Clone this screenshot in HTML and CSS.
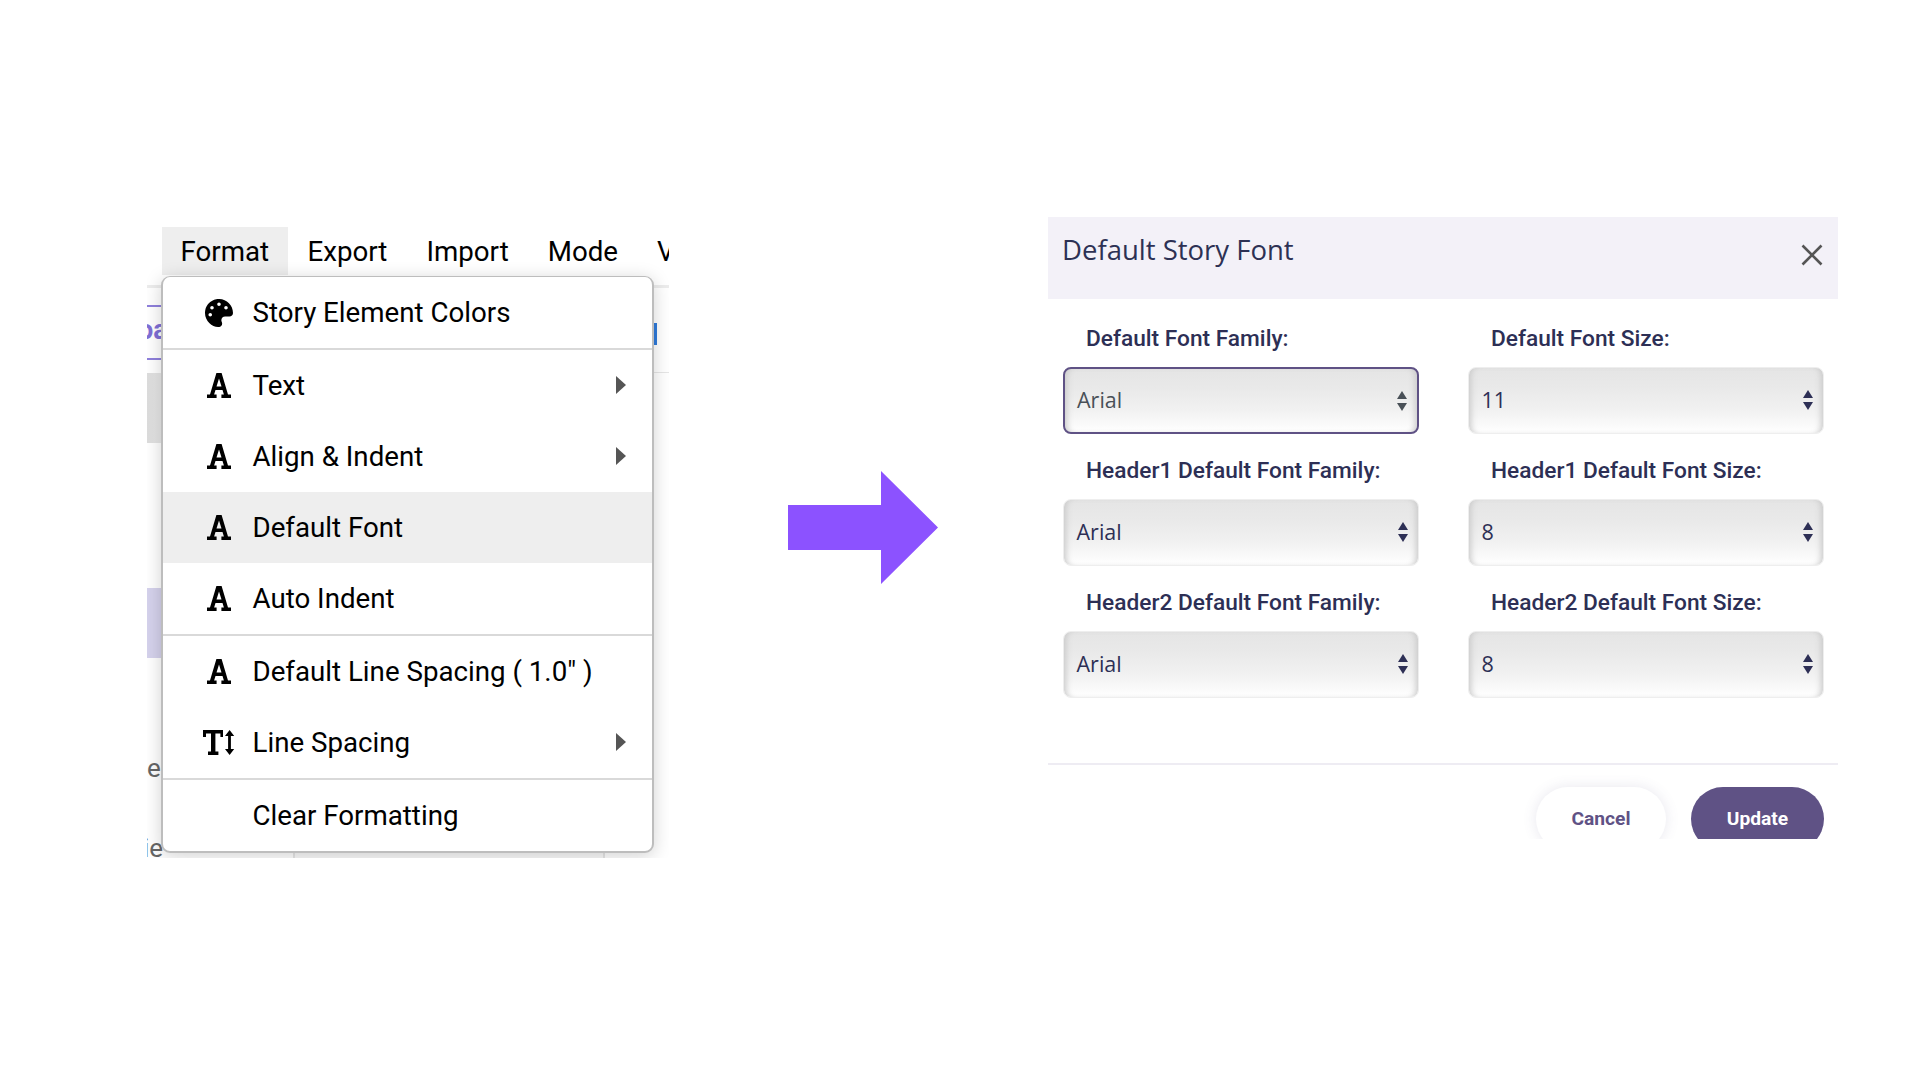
FILE: index.html
```html
<!DOCTYPE html>
<html lang="en">
<head>
<meta charset="utf-8">
<title>Default Story Font</title>
<link rel="stylesheet" href="styles.css">
</head>
<body>
<svg class="defs" width="0" height="0" aria-hidden="true">
  <symbol id="i-a" viewBox="0 0 24 25"><path fill-rule="evenodd" d="M9.4 0h5.2l6.4 21.4H24V25h-9.6v-3.6h2.5l-1.4-4.5H8.5l-1.400 4.500h2.500V25H0v-3.600h3zM12 5.600L9.500 13.600h5z"/></symbol>
</svg>
<section class="app">
  <div class="backdrop">
    <span class="bg-line"></span>
    <span class="bg-tab"></span>
    <span class="bg-text">oa</span>
    <span class="bg-blue"></span>
    <span class="bg-grey"></span>
    <span class="bg-rule"></span>
    <span class="bg-lilac"></span>
    <span class="bg-e">e</span>
    <span class="bg-ie">ie</span>
    <span class="bg-foot"></span>
  </div>
  <nav class="tabs">
    <span class="tab active">Format</span>
    <span class="tab">Export</span>
    <span class="tab">Import</span>
    <span class="tab">Mode</span>
    <span class="tab">View</span>
  </nav>
  <div class="menu">
    <div class="item">
      <svg class="icon palette" viewBox="0 0 512 512"><path d="M204.3 5C104.9 24.4 24.8 104.3 5.2 203.4c-37 187 131.7 326.4 258.8 306.7 41.2-6.4 61.4-54.6 42.5-91.7-23.1-45.4 9.9-98.4 60.9-98.4h79.7c35.8 0 64.8-29.6 64.9-65.3C511.5 97.1 368.1-26.9 204.3 5zM96 320c-17.7 0-32-14.3-32-32s14.3-32 32-32 32 14.3 32 32-14.3 32-32 32zm32-128c-17.7 0-32-14.3-32-32s14.3-32 32-32 32 14.3 32 32-14.3 32-32 32zm128-64c-17.7 0-32-14.3-32-32s14.3-32 32-32 32 14.3 32 32-14.3 32-32 32zm128 64c-17.7 0-32-14.3-32-32s14.3-32 32-32 32 14.3 32 32-14.3 32-32 32z"/></svg>
      <span>Story Element Colors</span>
    </div>
    <div class="item sep">
      <svg class="icon"><use href="#i-a"/></svg><span>Text</span><i class="caret"></i>
    </div>
    <div class="item">
      <svg class="icon"><use href="#i-a"/></svg><span>Align &amp; Indent</span><i class="caret"></i>
    </div>
    <div class="item hover">
      <svg class="icon"><use href="#i-a"/></svg><span>Default Font</span>
    </div>
    <div class="item">
      <svg class="icon"><use href="#i-a"/></svg><span>Auto Indent</span>
    </div>
    <div class="item sep">
      <svg class="icon"><use href="#i-a"/></svg><span>Default Line Spacing ( 1.0" )</span>
    </div>
    <div class="item">
      <svg class="icon" viewBox="0 0 32 25"><path d="M0 0h20v7h-2.600V3.600h-5V21.400h3V25H5v-3.600h3V3.600H3V7H0zM26.600 0l4.600 6h-3.300v13h3.300l-4.600 6-4.600-6h3.100V6H22z"/></svg>
      <span>Line Spacing</span><i class="caret"></i>
    </div>
    <div class="item sep">
      <span class="icon"></span><span>Clear Formatting</span>
    </div>
  </div>
</section>

<svg class="arrow" viewBox="0 0 150 113"><path d="M0 34h93V0l57 56.500-57 56.500V79H0z"/></svg>

<section class="dialog">
  <header class="dialog-head">
    <h1>Default Story Font</h1>
    <svg class="close" viewBox="0 0 22 22"><path d="M1.500 1.500l19 19M20.500 1.500l-19 19"/></svg>
  </header>
  <div class="fields">
    <div class="field"><label>Default Font Family:</label><div class="select focus"><span>Arial</span><i class="updown"></i></div></div>
    <div class="field"><label>Default Font Size:</label><div class="select"><span>11</span><i class="updown"></i></div></div>
    <div class="field"><label>Header1 Default Font Family:</label><div class="select"><span>Arial</span><i class="updown"></i></div></div>
    <div class="field"><label>Header1 Default Font Size:</label><div class="select"><span>8</span><i class="updown"></i></div></div>
    <div class="field"><label>Header2 Default Font Family:</label><div class="select"><span>Arial</span><i class="updown"></i></div></div>
    <div class="field"><label>Header2 Default Font Size:</label><div class="select"><span>8</span><i class="updown"></i></div></div>
  </div>
  <footer class="dialog-foot">
    <button class="btn cancel">Cancel</button>
    <button class="btn update">Update</button>
  </footer>
</section>
</body>
</html>
```
FILE: styles.css
```css
* { box-sizing: border-box; }
html, body { margin: 0; height: 100%; }
body {
  width: 1920px;
  height: 1080px;
  overflow: hidden;
  background: #fff;
  display: flex;
  align-items: flex-start;
  padding-left: 147px;
  font-family: Roboto, "Liberation Sans", sans-serif;
}
.defs { position: absolute; }

/* left: cropped app screenshot */
.app {
  position: relative;
  width: 522px;
  height: 631px;
  margin-top: 227px;
  overflow: hidden;
  flex: none;
}
.backdrop { position: absolute; inset: 0; }
.backdrop > * { position: absolute; }
.bg-line { left: 0; right: 0; top: 58px; height: 3px; background: #ececec; }
.bg-tab { left: 0; width: 15px; top: 78px; height: 55px; border-top: 2px solid #8f80dc; border-bottom: 2px solid #8f80dc; }
.bg-text { left: -9px; top: 88px; font-size: 27px; line-height: 30px; font-weight: 700; color: #7f6fd6; white-space: nowrap; }
.bg-blue { left: 507px; top: 96px; width: 3px; height: 22px; background: #2f7bdc; }
.bg-grey { left: 0; width: 15px; top: 146px; height: 70px; background: linear-gradient(90deg, #dcdcdc, #e9e9e9); }
.bg-rule { left: 500px; right: 0; top: 145px; height: 1px; background: #e6e6e6; }
.bg-lilac { left: 0; width: 15px; top: 361px; height: 70px; background: #d5d2ec; }
.bg-e { left: 0; top: 526px; font-size: 26px; line-height: 30px; color: #666; }
.bg-ie { left: -4px; top: 606px; font-size: 26px; line-height: 30px; color: #666; white-space: nowrap; }
.bg-foot { left: 146px; width: 312px; bottom: 0; height: 12px; background: #fafafa; border-left: 2px solid #e6e6e6; border-right: 2px solid #e6e6e6; }

.tabs { position: relative; display: flex; height: 48px; margin-left: 14.500px; color: #000; font-size: 27.700px; line-height: 50px; white-space: nowrap; }
.tab { flex: none; padding: 0 19.500px; }
.active { background: #eee; width: 126.500px; padding: 0 0 0 19px; }

.menu {
  position: absolute;
  left: 14px;
  top: 49px;
  width: 493px;
  height: 577px;
  background: #fff;
  border: 2px solid #bdbdbd;
  border-top-width: 1.500px;
  border-radius: 9px;
  box-shadow: 0 3px 18px rgba(0,0,0,.18);
  overflow: hidden;
  color: #000;
  font-size: 27.700px;
}
.item { position: relative; display: flex; align-items: center; height: 71px; padding-left: 39.500px; }
.sep { border-top: 2px solid #d9d9d9; height: 73px; }
.hover { background: #eee; }
.icon { width: 32px; height: 25px; margin-right: 18px; flex: none; fill: #000; display: block; }
.palette { height: 28px; }
.caret { position: absolute; right: 26px; top: 50%; margin-top: -10px; border-left: 10px solid #555; border-top: 9px solid transparent; border-bottom: 9px solid transparent; }

/* arrow */
.arrow { width: 150px; height: 113px; margin: 471px 0 0 118.500px; flex: none; fill: #8c52ff; display: block; }

/* right: dialog */
.dialog { width: 790px; height: 622px; margin: 217px 0 0 110.500px; flex: none; overflow: hidden; color: #2d2f55; }
.dialog-head { height: 82px; background: #f3f1f8; display: flex; justify-content: space-between; padding: 13px 15px 0 14px; }
.dialog-head h1 { margin: 0; font: 400 27.500px/40px "Open Sans", sans-serif; color: #2d3154; }
.close { width: 22px; height: 22px; margin: 14px 0 0 0; fill: none; stroke: #555; stroke-width: 2.600px; }
.fields { display: grid; grid-template-columns: 356.500px 356.500px; column-gap: 48.500px; padding: 3px 0 0 14.500px; }
.field label { display: block; height: 65px; padding: 21.500px 0 0 23.500px; font-size: 22.700px; line-height: 30px; font-weight: 500; color: #2d2f55; white-space: nowrap; }
.select {
  position: relative;
  height: 67px;
  display: flex;
  align-items: center;
  padding: 0 13px 2px;
  border: 1.500px solid #eeeeee;
  border-radius: 8px;
  font: 400 21.500px/30px "Open Sans", sans-serif;
  color: #2d2f55;
  background: linear-gradient(180deg, #e5e5e5 0%, #e9e9e9 30%, #f1f1f1 65%, #ffffff 100%);
  box-shadow: inset 6px 0 6px -4px #c9c9c9, inset -6px 0 6px -4px #c9c9c9;
}
.field:first-child .select { border: 2px solid #5f5285; color: #495057; padding-left: 12.500px; }
.field:first-child .updown::before { border-bottom-color: #495057; }
.field:first-child .updown::after { border-top-color: #495057; }
.updown { position: absolute; right: 9px; top: 22px; width: 12px; height: 20px; }
.updown::before, .updown::after { content: ""; position: absolute; left: 1px; border-left: 5px solid transparent; border-right: 5px solid transparent; }
.updown::before { top: 0; border-bottom: 8.500px solid #2d2f55; }
.updown::after { bottom: 0; border-top: 8.500px solid #2d2f55; }

.dialog-foot { margin-top: 65px; border-top: 2px solid #eeecf3; display: flex; justify-content: flex-end; gap: 25px; padding: 22px 14px 0 0; }
.btn { height: 64px; border: 0; border-radius: 32px; padding-bottom: 3px; font: 700 19.200px Roboto, sans-serif; }
.cancel { width: 130px; background: #fff; color: #5f5285; box-shadow: 0 0 14px rgba(95,82,133,.14); }
.update { width: 133px; background: #5f5285; color: #fff; }
```
